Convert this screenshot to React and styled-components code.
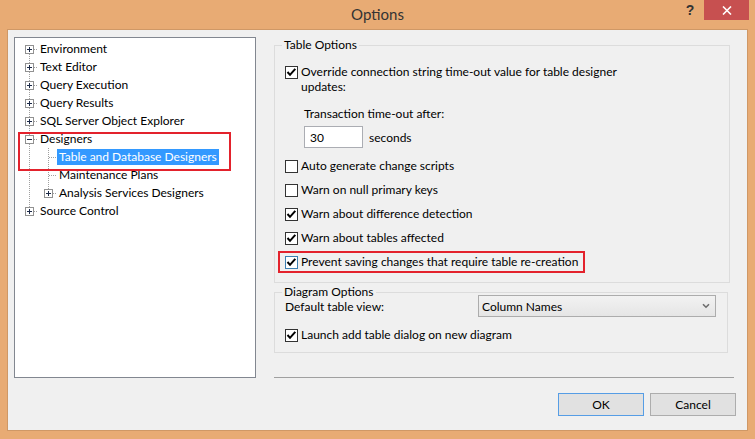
import React from 'react';
import styled, { createGlobalStyle } from 'styled-components';

const FONT = `Lato, "Noto Sans", "DejaVu Sans", sans-serif`;

const GlobalStyle = createGlobalStyle`
  html, body { margin: 0; padding: 0; background: #e8ab74; }
  body { font-family: ${FONT}; font-size: 12px; color: #000; }
  * { box-sizing: border-box; }
`;

const Window = styled.div`
  width: 755px;
  height: 439px;
  display: flex;
  flex-direction: column;
  background: #e8ab74;
  overflow: hidden;
`;

const TitleBar = styled.div`
  height: 29px;
  flex: none;
  display: grid;
  grid-template-columns: 1fr auto 1fr;
  align-items: start;
`;

const Title = styled.div`
  grid-column: 2;
  font-size: 15px;
  line-height: 28px;
  color: #333;
`;

const CaptionButtons = styled.div`
  grid-column: 3;
  justify-self: end;
  display: flex;
  align-items: flex-start;
  margin-right: 6px;
`;

const HelpButton = styled.div`
  width: 20px;
  height: 20px;
  margin-right: 4px;
  display: flex;
  align-items: center;
  justify-content: center;
  font-family: "Liberation Sans", Arial, sans-serif;
  font-weight: bold;
  font-size: 14px;
  color: #333;
`;

const CloseButton = styled.div`
  width: 45px;
  height: 20px;
  background: #c75050;
  display: flex;
  align-items: center;
  justify-content: center;
`;

const Body = styled.div`
  flex: 1;
  margin: 0 7px 8px;
  background: #f0f0f0;
  border: 1px solid #cf9866;
  padding: 7px 11px 0 6px;
  display: flex;
  flex-direction: column;
`;

const Main = styled.div`
  display: flex;
  gap: 18px;
  height: 341px;
  flex: none;
`;

const Tree = styled.div`
  position: relative;
  width: 242px;
  height: 341px;
  border: 1px solid #828790;
  background: #fff;
  padding: 2px 0 0 4px;
`;

const TreeRow = styled.div`
  display: flex;
  align-items: center;
  height: 18px;
`;

const TreeLabel = styled.span`
  padding: 0 2px;
  line-height: 16px;
  white-space: nowrap;
  background: ${p => (p.$selected ? '#3399ff' : 'transparent')};
  color: ${p => (p.$selected ? '#fff' : '#000')};
`;

const CellSvg = styled.svg`
  display: block;
  flex: none;
`;

const TreeAnnotation = styled.div`
  position: absolute;
  left: 3px;
  top: 94px;
  width: 213px;
  height: 39px;
  border: 2px solid #e3222c;
  pointer-events: none;
`;

const RightCol = styled.div`
  width: 460px;
  display: flex;
  flex-direction: column;
`;

const GroupBox = styled.fieldset`
  margin: ${p => p.$mt || 0}px 0 0;
  padding: 0;
  border: 1px solid #dcdcdc;
  width: ${p => p.$w}px;
  min-width: 0;
`;

const Legend = styled.legend`
  margin-left: 7px;
  padding: 0 2px;
  font-size: 12px;
  line-height: 16px;
`;

const GroupBody = styled.div`
  padding: ${p => p.$pad};
  display: flex;
  flex-direction: column;
  align-items: flex-start;
`;

const CheckRow = styled.div`
  display: flex;
  align-items: ${p => (p.$multi ? 'flex-start' : 'center')};
  gap: 3px;
  line-height: ${p => (p.$multi ? 15 : 16)}px;
  white-space: nowrap;
  ${p =>
    p.$marked &&
    `
    border: 2px solid #e3222c;
    padding: 1px 5px;
    margin: -3px -7px;
  `}
`;

const CheckList = styled.div`
  display: flex;
  flex-direction: column;
  align-items: flex-start;
  gap: 8px;
  margin-top: 10px;
`;

const Box = styled.span`
  width: 13px;
  height: 13px;
  flex: none;
  border: 1px solid ${p => (p.$focus ? '#3c7fb1' : '#333')};
  background: #fff;
  display: inline-flex;
  align-items: center;
  justify-content: center;
  margin-top: ${p => (p.$multi ? 2 : 0)}px;
`;

const Indent = styled.div`
  margin: 12px 0 0 19px;
  display: flex;
  flex-direction: column;
  align-items: flex-start;
  line-height: 15px;
`;

const InputRow = styled.div`
  display: flex;
  align-items: center;
  gap: 6px;
  margin-top: 5px;
`;

const TextInput = styled.input`
  width: 59px;
  height: 22px;
  border: 1px solid #abadb3;
  background: #fff;
  padding: 0 5px;
  font: inherit;
  font-size: 12px;
  color: #000;
  outline: none;
`;

const FieldRow = styled.div`
  display: flex;
  align-items: center;
  margin-top: -5px;
`;

const FieldLabel = styled.span`
  width: 193px;
  flex: none;
`;

const Dropdown = styled.div`
  width: 238px;
  height: 22px;
  border: 1px solid #acacac;
  background: linear-gradient(#f2f2f2, #e5e5e5);
  display: flex;
  align-items: center;
  justify-content: space-between;
  padding: 0 5px 0 3px;
`;

const Separator = styled.div`
  margin-top: auto;
  height: 1px;
  background: #a0a0a0;
`;

const Footer = styled.div`
  display: flex;
  justify-content: flex-end;
  gap: 6px;
  margin-top: 15px;
`;

const Button = styled.div`
  width: 86px;
  height: 23px;
  border: 1px solid ${p => (p.$default ? '#569de5' : '#adadad')};
  background: #e1e1e1;
  display: flex;
  align-items: center;
  justify-content: center;
`;

const DOT = { stroke: '#a0a0a0', strokeWidth: 1, strokeDasharray: '1 1' };

function Cell({ up, down, across, through, expander }) {
  return (
    <CellSvg width="19" height="18" viewBox="0 0 19 18">
      {through && <line x1="10.5" y1="0" x2="10.5" y2="18" {...DOT} />}
      {up && <line x1="10.5" y1="0" x2="10.5" y2="9" {...DOT} />}
      {down && <line x1="10.5" y1="10" x2="10.5" y2="18" {...DOT} />}
      {across && <line x1="11" y1="9.5" x2="19" y2="9.5" {...DOT} />}
      {expander && (
        <g>
          <rect x="6.5" y="5.5" width="8" height="8" fill="#fff" stroke="#919191" />
          <line x1="8" y1="9.5" x2="13" y2="9.5" stroke="#1c2a48" />
          {expander === 'plus' && <line x1="10.5" y1="7" x2="10.5" y2="12" stroke="#1c2a48" />}
        </g>
      )}
    </CellSvg>
  );
}

const treeData = [
  { label: 'Environment', exp: 'plus' },
  { label: 'Text Editor', exp: 'plus' },
  { label: 'Query Execution', exp: 'plus' },
  { label: 'Query Results', exp: 'plus' },
  { label: 'SQL Server Object Explorer', exp: 'plus' },
  {
    label: 'Designers',
    exp: 'minus',
    children: [
      { label: 'Table and Database Designers', selected: true },
      { label: 'Maintenance Plans' },
      { label: 'Analysis Services Designers', exp: 'plus' },
    ],
  },
  { label: 'Source Control', exp: 'plus' },
];

function flatten(nodes, guides = [], depth = 0) {
  const rows = [];
  nodes.forEach((n, i) => {
    const hasNext = i < nodes.length - 1;
    rows.push({
      ...n,
      guides,
      connector: { up: !(depth === 0 && i === 0), down: hasNext, across: true, expander: n.exp },
    });
    if (n.children) rows.push(...flatten(n.children, [...guides, hasNext], depth + 1));
  });
  return rows;
}

const Check = () => (
  <svg width="11" height="11" viewBox="0 0 11 11">
    <polyline points="1.5,5 4,7.8 9.3,1.8" fill="none" stroke="#000" strokeWidth="2" />
  </svg>
);

function CheckBox({ checked, focus, multi }) {
  return (
    <Box $focus={focus} $multi={multi}>
      {checked && <Check />}
    </Box>
  );
}

const options = [
  { label: 'Auto generate change scripts', checked: false },
  { label: 'Warn on null primary keys', checked: false },
  { label: 'Warn about difference detection', checked: true },
  { label: 'Warn about tables affected', checked: true },
  { label: 'Prevent saving changes that require table re-creation', checked: true, marked: true },
];

export default function App() {
  const rows = flatten(treeData);
  return (
    <>
      <GlobalStyle />
      <Window>
        <TitleBar>
          <Title>Options</Title>
          <CaptionButtons>
            <HelpButton>?</HelpButton>
            <CloseButton>
              <svg width="10" height="9" viewBox="0 0 10 9">
                <path d="M1 0.5 L9 8.5 M9 0.5 L1 8.5" stroke="#fff" strokeWidth="1.6" />
              </svg>
            </CloseButton>
          </CaptionButtons>
        </TitleBar>
        <Body>
          <Main>
            <Tree>
              {rows.map(r => (
                <TreeRow key={r.label}>
                  {r.guides.map((g, i) => (
                    <Cell key={i} through={g} />
                  ))}
                  <Cell {...r.connector} />
                  <TreeLabel $selected={r.selected}>{r.label}</TreeLabel>
                </TreeRow>
              ))}
              <TreeAnnotation />
            </Tree>
            <RightCol>
              <GroupBox $w={456}>
                <Legend>Table Options</Legend>
                <GroupBody $pad="11px 10px 12px">
                  <CheckRow $multi>
                    <CheckBox checked multi />
                    <span>
                      Override connection string time-out value for table designer
                      <br />
                      updates:
                    </span>
                  </CheckRow>
                  <Indent>
                    <span>Transaction time-out after:</span>
                    <InputRow>
                      <TextInput defaultValue="30" readOnly />
                      <span>seconds</span>
                    </InputRow>
                  </Indent>
                  <CheckList>
                    {options.map(o => (
                      <CheckRow key={o.label} $marked={o.marked}>
                        <CheckBox checked={o.checked} focus={o.marked} />
                        <span>{o.label}</span>
                      </CheckRow>
                    ))}
                  </CheckList>
                </GroupBody>
              </GroupBox>
              <GroupBox $w={454} $mt={1}>
                <Legend>Diagram Options</Legend>
                <GroupBody $pad="0 10px 9px">
                  <FieldRow>
                    <FieldLabel>Default table view:</FieldLabel>
                    <Dropdown>
                      <span>Column Names</span>
                      <svg width="8" height="6" viewBox="0 0 8 6">
                        <path d="M1 1.2 L4 4.2 L7 1.2" fill="none" stroke="#6d6d6d" strokeWidth="1.6" />
                      </svg>
                    </Dropdown>
                  </FieldRow>
                  <CheckList>
                    <CheckRow>
                      <CheckBox checked />
                      <span>Launch add table dialog on new diagram</span>
                    </CheckRow>
                  </CheckList>
                </GroupBody>
              </GroupBox>
              <Separator />
            </RightCol>
          </Main>
          <Footer>
            <Button $default>OK</Button>
            <Button>Cancel</Button>
          </Footer>
        </Body>
      </Window>
    </>
  );
}
